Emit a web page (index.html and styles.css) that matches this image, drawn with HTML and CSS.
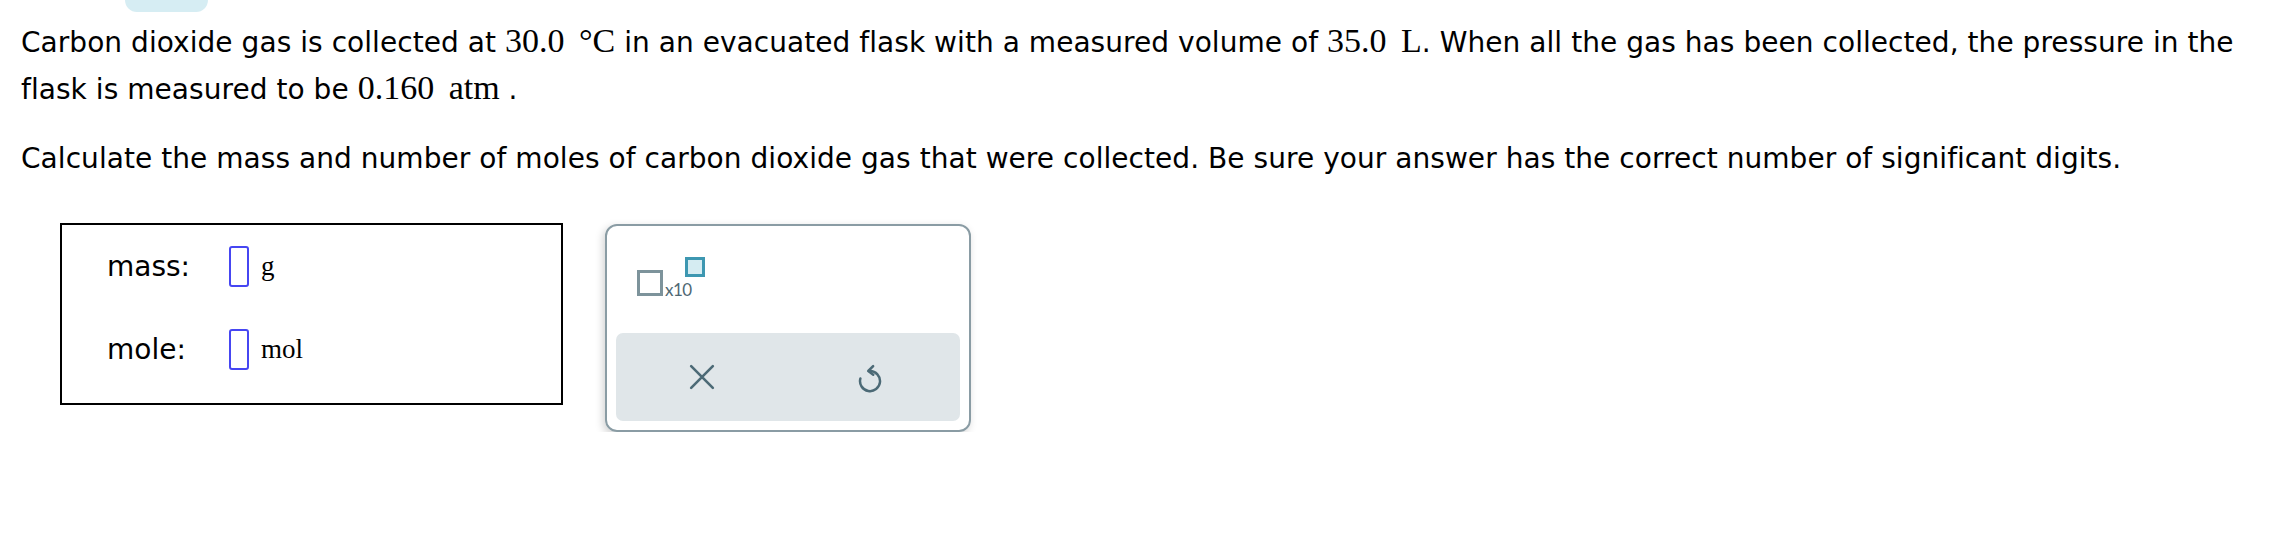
FILE: index.html
```html
<!DOCTYPE html>
<html>
<head>
<meta charset="utf-8">
<link rel="stylesheet" href="styles.css">
</head>
<body>
<div class="tab"></div>
<div class="question">
  <p class="para">Carbon dioxide gas is collected at <span class="m">30.0 °C</span> in an evacuated flask with a measured volume of <span class="m">35.0 L</span>. When all the gas has been collected, the pressure in the flask is measured to be <span class="m">0.160 atm</span> .</p>
  <p class="para para2">Calculate the mass and number of moles of carbon dioxide gas that were collected. Be sure your answer has the correct number of significant digits.</p>
</div>
<div class="work">
  <div class="answer">
    <div class="row">
      <span class="label">mass:</span>
      <span class="input"></span>
      <span class="unit">g</span>
    </div>
    <div class="row">
      <span class="label">mole:</span>
      <span class="input"></span>
      <span class="unit">mol</span>
    </div>
  </div>
  <div class="palette">
    <div class="sci">
      <span class="sci-box"></span>
      <span class="sci-text">x10</span>
      <span class="sci-exp"></span>
    </div>
    <div class="actions">
      <svg class="icon" viewBox="0 0 24 24" width="26" height="26">
        <path d="M2 2 L22 22 M22 2 L2 22" fill="none" stroke="#4c6a76" stroke-width="2.4" stroke-linecap="round"/>
      </svg>
      <svg class="icon" viewBox="0 0 24 24" width="30" height="30">
        <path d="M12 6.5 A8 8 0 1 1 4.3 12.4" fill="none" stroke="#4c6a76" stroke-width="2" stroke-linecap="round"/>
        <path d="M14.5 2.5 L10.6 6.4 L14.6 9.4" fill="none" stroke="#4c6a76" stroke-width="2" stroke-linecap="round" stroke-linejoin="round"/>
      </svg>
    </div>
  </div>
</div>
</body>
</html>
```
FILE: styles.css
```css
html, body {
  margin: 0;
  padding: 0;
  background: #fff;
}
body {
  font-family: "DejaVu Sans", Verdana, sans-serif;
  color: #000;
}
.tab {
  width: 83px;
  height: 12px;
  margin-left: 125px;
  background: #d6edf3;
  border-radius: 0 0 12px 12px;
}
.question {
  padding: 7px 0 0 21px;
  width: 2255px;
}
.para {
  margin: 0;
  font-size: 28px;
  line-height: 47px;
  letter-spacing: 0.05px;
}
.para2 {
  margin-top: 22px;
}
.m {
  font-family: "Liberation Serif", "Times New Roman", serif;
  font-size: 34px;
  line-height: 1;
  word-spacing: 6px;
  letter-spacing: 0;
}
.work {
  display: flex;
  align-items: flex-start;
  gap: 42px;
  margin: 41px 0 0 60px;
}
.answer {
  border: 2px solid #000;
  padding: 21px 0 0 45px;
  width: 454px;
  height: 157px;
}
.row {
  display: flex;
  align-items: center;
  height: 41px;
}
.row + .row {
  margin-top: 42px;
}
.label {
  width: 122px;
  font-size: 28px;
}
.input {
  width: 16px;
  height: 37px;
  border: 2px solid #4646f2;
  border-radius: 3px;
}
.unit {
  margin-left: 12px;
  font-family: "Liberation Serif", "Times New Roman", serif;
  font-size: 27px;
}
.palette {
  border: 2px solid #8a9ca4;
  border-radius: 12px;
  margin-top: 1px;
  box-shadow: -2px 3px 8px rgba(0, 0, 0, 0.18);
  display: flex;
  flex-direction: column;
  padding: 0 9px 9px;
  width: 344px;
  height: 195px;
}
.sci {
  display: flex;
  align-items: flex-start;
  margin: 31px 0 0 21px;
  height: 76px;
}
.sci-box {
  width: 20px;
  height: 20px;
  border: 3px solid #7d939b;
  margin-top: 13px;
}
.sci-text {
  font-family: Lato, "Open Sans", sans-serif;
  font-size: 17px;
  color: #4f6873;
  margin-top: 22px;
  margin-left: 2px;
  letter-spacing: -0.5px;
}
.sci-exp {
  width: 14px;
  height: 14px;
  border: 3px solid #3d97b1;
  background: #d5ecf2;
  margin-left: -7px;
}
.actions {
  height: 88px;
  background: #e0e6e9;
  border-radius: 7px;
  display: flex;
  align-items: center;
}
.icon {
  display: block;
}
.icon:first-child {
  margin-left: 73px;
}
.icon:last-child {
  margin-left: 140px;
  margin-top: 2px;
}
```
